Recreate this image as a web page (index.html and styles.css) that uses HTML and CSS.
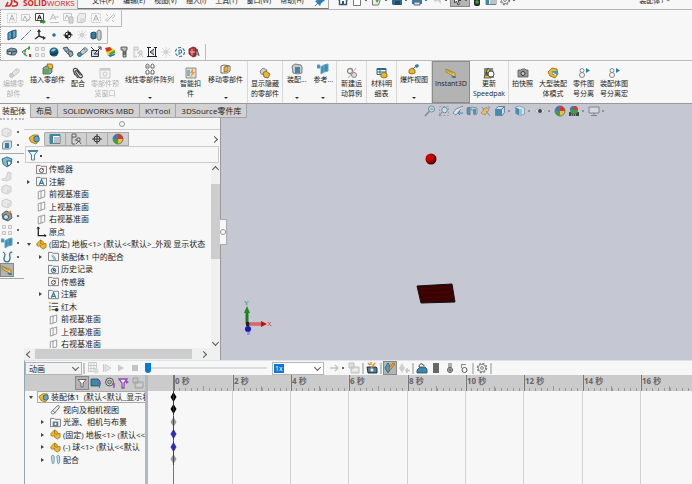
FILE: index.html
```
<!DOCTYPE html>
<html lang="zh-CN">
<head>
    <meta charset="UTF-8">
    <meta name="viewport" content="width=device-width, initial-scale=1.0">
    <title>装配体1</title>
    <link rel="stylesheet" href="styles.css">
</head>
<body>
    <!-- Icon sprite -->
    <svg class="sprite" aria-hidden="true">
        <symbol id="note" viewBox="0 0 12 12"><path d="M1.5 1.5h9v9h-9z" fill="none" stroke="#777" stroke-dasharray="2 1"/><path d="M3.5 9L6 3l2.500 6M4.500 7h3" fill="none" stroke="#333"/></symbol>
        <symbol id="note-edit" viewBox="0 0 12 12"><path d="M1.500 2.500h8v6h-8z" fill="none" stroke="#777"/><path d="M3 8l2-4 2 4M6 10l5-5" fill="none" stroke="#333"/></symbol>
        <symbol id="note-add" viewBox="0 0 12 12"><path d="M1.500 1.500h8v7h-8z" fill="#fff" stroke="#444"/><path d="M3.500 7.500L5.500 3l2 4.500M4 6h3" fill="none" stroke="#111"/><path d="M6 9h3V7l3 3-3 2v-1H6z" fill="#2a9a2a"/></symbol>
        <symbol id="note-lines" viewBox="0 0 12 12"><path d="M2 8l3-6 3 6M3 6h4M7 5h4M2 10.500h9" fill="none" stroke="#555"/></symbol>
        <symbol id="note-lock" viewBox="0 0 12 12"><path d="M1.500 1.500h8v7h-8z" fill="none" stroke="#777"/><path d="M3 7l2-4 2 4" fill="none" stroke="#333"/><path d="M7 5h4v6H7z" fill="#999" stroke="#555"/></symbol>
        <symbol id="note-stack" viewBox="0 0 12 12"><path d="M1.500 4.500l2-3h6v6l-2 3h-6z" fill="#ddd" stroke="#666"/><path d="M4 6h6v4H4z" fill="#aaa"/></symbol>
        <symbol id="link" viewBox="0 0 12 12"><path d="M5 7L3 9.500 1.500 8 4 5.500M7 5l2.500-2.500L11 4 8 6.500M4 8l4-4M2 2l2 2M8 8l2 2" fill="none" stroke="#555"/></symbol>
        <symbol id="plane" viewBox="0 0 12 12"><path d="M2 4l4-2v7l-4 2zM6 2l4-1v7l-4 2z" fill="#5fa3c7" stroke="#1e5674"/></symbol>
        <symbol id="axis" viewBox="0 0 12 12"><path d="M1 11L11 1" stroke="#3b7fa5" stroke-dasharray="5 1"/></symbol>
        <symbol id="coord" viewBox="0 0 12 12"><path d="M5 1v6l5 2M5 7l-4 3" fill="none" stroke="#333" stroke-width="1.500"/><path d="M3 3l2-3 2 3zM9 7l3 2-3 2z" fill="#333"/></symbol>
        <symbol id="point" viewBox="0 0 12 12"><circle cx="6" cy="6" r="1.800" fill="#2d7397"/></symbol>
        <symbol id="mass" viewBox="0 0 12 12"><circle cx="6" cy="6" r="3" fill="#fff" stroke="#222"/><path d="M6 6V2.500a3.500 3.500 0 0 1 3.500 3.500zM6 6v3.500a3.500 3.500 0 0 1-3.500-3.500z" fill="#222"/><path d="M6 1v10M1 6h10" stroke="#222" stroke-width=".6"/></symbol>
        <symbol id="burst" viewBox="0 0 12 12"><path d="M6 1v10M1 6h10M2 2l8 8M10 2l-8 8" stroke="#888" stroke-width=".8"/><circle cx="6" cy="6" r="2" fill="#888"/></symbol>
        <symbol id="mate-ref" viewBox="0 0 12 12"><path d="M1 4l3-1 2 1v5l-3 1-2-1z" fill="#347da3" stroke="#1e4d68"/><path d="M7 3c1-3 4-2 4 0v6c0 3-3 3-4 0z" fill="#ccc" stroke="#777"/></symbol>
        <symbol id="glasses" viewBox="0 0 12 12"><path d="M1 4l4-2 5 1 1 3-2 3H5L1 8z" fill="#6d98ac" stroke="#444" stroke-width=".8"/><path d="M1 5l5 1 5-1M6 6L5 9" fill="none" stroke="#333" stroke-width=".8"/><circle cx="4" cy="7" r="1" fill="#ddd"/></symbol>
        <symbol id="clearance" viewBox="0 0 12 12"><path d="M8 2L2 6l5 4M5 4v4" fill="none" stroke="#666"/><path d="M3 5l3-2v3zM8 1l2-1v3L8 4z" fill="#3a3"/><path d="M9 8h2v3H9z" fill="#e22"/><path d="M4 8l3 2" stroke="#3a3" stroke-width="1.300"/></symbol>
        <symbol id="pattern" viewBox="0 0 12 12"><path d="M1.500 1.500h3v3h-3zM7.500 1.500h3v3h-3zM1.500 7.500h3v3h-3zM7.500 7.500h3v3h-3z" fill="#ddd" stroke="#666"/></symbol>
        <symbol id="globe" viewBox="0 0 12 12"><circle cx="6" cy="6" r="4.500" fill="#1f5878"/><path d="M3 5c1-3 4-3 5-2-1 2-3 3-5 2z" fill="#8fc5dd"/><path d="M2 8c3 1 6 0 8-2" fill="none" stroke="#0b2839"/></symbol>
        <symbol id="cylinders" viewBox="0 0 12 12"><path d="M1 2l4-1 2 3-3 2zM6 6l4-1 1 4-3 2z" fill="#7fb3cb" stroke="#555"/><path d="M4 6l3 3M6 3l4 3" stroke="#555"/></symbol>
        <symbol id="clip" viewBox="0 0 12 12"><path d="M2 8l6-6c2-1 4 1 3 3L6 9" fill="#ccc" stroke="#666"/><circle cx="3.500" cy="8.500" r="2" fill="#4c93b5" stroke="#285b75"/><circle cx="8.500" cy="3.500" r="1" fill="#4c93b5"/></symbol>
        <symbol id="measure" viewBox="0 0 12 12"><path d="M1.500 4.500h7v6h-7z" fill="#cde" stroke="#333"/><path d="M1 1l3 3M4 8l6-6M8 1h3v3M4 8h5" fill="none" stroke="#333"/></symbol>
        <symbol id="rainbow" viewBox="0 0 12 12"><path d="M1 2l5-1 5 3v5L6 11 3 9z" fill="#f6d33b"/><path d="M1 2l5-1 2 3-5 2z" fill="#dc3024"/><path d="M5 7l6-3v3L6 9z" fill="#3daf3d"/><path d="M4 9l2 2 5-2V8z" fill="#2a67c5"/></symbol>
        <symbol id="bolt" viewBox="0 0 12 12"><path d="M3 1h6v3H8v7H5V4H3z" fill="#bbb" stroke="#444" stroke-width=".8"/><path d="M5 6h3M5 8h3" stroke="#333"/></symbol>
        <symbol id="section" viewBox="0 0 12 12"><path d="M2.500 1v10M9.500 1v10M1 1.500h4M1 10.500h10M8 1.500h3" stroke="#222"/><path d="M8 3L4 6l4 3" fill="#9bd" stroke="#333"/></symbol>
        <symbol id="gear" viewBox="0 0 12 12"><circle cx="6" cy="6" r="4.600" fill="none" stroke="#777" stroke-width="1.200" stroke-dasharray="2 1.600"/><circle cx="6" cy="6" r="3.700" fill="none" stroke="#777" stroke-width=".8"/><circle cx="6" cy="6" r="1.400" fill="none" stroke="#666" stroke-width=".8"/></symbol>
        <symbol id="cycle" viewBox="0 0 12 12"><circle cx="6" cy="6" r="4.500" fill="none" stroke="#2d7d9e" stroke-width="1.200" stroke-dasharray="3 1.700"/><path d="M5 9V4h2.500v3H5" fill="none" stroke="#2d7d9e"/></symbol>
        <symbol id="redbox" viewBox="0 0 12 12"><path d="M1 3l4-2 3 1v8l-3 1-4-3z" fill="#b93337" stroke="#721" stroke-width=".8"/><path d="M4 3v6M2 6h5" stroke="#e9b5b5"/><path d="M6.500 10L9 3l2 7M7.500 8h3" fill="none" stroke="#444"/></symbol>
        <symbol id="home" viewBox="0 0 12 12"><path d="M1 6l5-5 5 5M2.500 5.500v5h7v-5" fill="#fff" stroke="#35586c" stroke-width="1.400"/><path d="M5 7h2v4H5z" fill="#35586c"/></symbol>
        <symbol id="page" viewBox="0 0 12 12"><path d="M2.500.5h5l2 2v9h-7z" fill="#fff" stroke="#777"/></symbol>
        <symbol id="open" viewBox="0 0 12 12"><path d="M1.500 11V1h6l3 1-3 9z" fill="#eee" stroke="#777"/><path d="M4 5l3-3 1 4-2 3z" fill="#4a2"/></symbol>
        <symbol id="save" viewBox="0 0 12 12"><path d="M1 1h10v10H2l-1-1z" fill="#286d90"/><path d="M3 1h6v4H3z" fill="#8cc"/><path d="M4 7h5v4H4z" fill="#345"/></symbol>
        <symbol id="print" viewBox="0 0 12 12"><path d="M3 1h6v4H3z" fill="#fff" stroke="#777"/><path d="M1 5h10v5H1z" fill="#397e9f"/><path d="M3 8h6v3H3z" fill="#dde" stroke="#567"/></symbol>
        <symbol id="undo" viewBox="0 0 12 12"><path d="M1 4l4-3v2c5 0 6 4 4 8 0-3-1-4-4-4v2z" fill="#888"/></symbol>
        <symbol id="cursor" viewBox="0 0 12 12"><path d="M3.500 1v8l2-2 1.500 4 1.500-.7L7 6.500h3z" fill="#fff" stroke="#444"/></symbol>
        <symbol id="traffic" viewBox="0 0 12 12"><rect x="3" y="0" width="6" height="12" rx="2" fill="#2b2b2b"/><circle cx="6" cy="3" r="1.500" fill="#a33"/><circle cx="6" cy="8" r="1.800" fill="#3a3"/></symbol>
        <symbol id="list" viewBox="0 0 12 12"><path d="M1 1.500h10v9H1z" fill="#fff" stroke="#466" stroke-width=".8"/><path d="M1 1h10v2H1zM1 3h3v8H1z" fill="#3b88aa"/><path d="M5 5h5M5 7h5M5 9h5" stroke="#567" stroke-width=".8"/></symbol>
        <symbol id="pin" viewBox="0 0 12 12"><path d="M6 1l5 5-2 .5-2 2L6 11 1 6l2.500-1 2-2z" fill="#2d7db3"/><path d="M1 11l3-3" stroke="#2d7db3"/></symbol>
        <symbol id="part" viewBox="0 0 12 12"><path d="M1 5l4-4 3 2v2h3v4L8 11 5 9V7L3 8 1 7z" fill="#eeb72e" stroke="#9a6a0b" stroke-width=".8"/><path d="M5 1v4l3 1" fill="none" stroke="#9a6a0b" stroke-width=".8"/></symbol>
        <symbol id="assembly" viewBox="0 0 12 12"><path d="M1 5l4-3 5 0 1 5-3 4-5-2z" fill="#eeb72e" stroke="#9a6a0b" stroke-width=".8"/><path d="M6 4l3-1 2 1v4L9 9 6 8z" fill="#5fa9cc" stroke="#285b75" stroke-width=".8"/></symbol>
        <symbol id="insert" viewBox="0 0 12 12"><path d="M1 5l3-2h6v6l-2 2H1z" fill="#7ea9bc" stroke="#456" stroke-width=".8"/><path d="M2 6h5v4H2z" fill="#68a94b"/><path d="M5 1h5l1 4-4 1z" fill="#efbd31" stroke="#8a6412" stroke-width=".8"/></symbol>
        <symbol id="paperclip" viewBox="0 0 12 12"><path d="M3 8L1.500 4C1 1.500 3 .5 5 2l5 6c1 2-1 4-3 2L3.500 5C3 4 4 3 5 4l3.500 4.500M3 7l3 4" fill="none" stroke="#444" stroke-width="1.200"/></symbol>
        <symbol id="window" viewBox="0 0 12 12"><path d="M1 1.500h10v9.500H1z" fill="#eee" stroke="#777"/><path d="M1 2.500h10" stroke="#777" stroke-width="2"/><circle cx="6" cy="7" r="2" fill="none" stroke="#777"/></symbol>
        <symbol id="array" viewBox="0 0 12 12"><path d="M2 2l1.500-1L5 2v3H2zM7 2l1.500-1L10 2v3H7zM2 8l1.500-1L5 8v3H2zM7 8l1.500-1L10 8v3H7z" fill="#fff" stroke="#555" stroke-width=".9"/><path d="M3 2.500h1v2H3z" fill="#e7b62c"/></symbol>
        <symbol id="fastener" viewBox="0 0 12 12"><path d="M1 1h10v10H1z" fill="#ddd" stroke="#777" stroke-width=".8"/><path d="M2 3h3v6H2z" fill="#7fb3cb"/><path d="M8 1L5 6h2l-2 5 5-6H8z" fill="#ef9b26"/></symbol>
        <symbol id="move" viewBox="0 0 12 12"><path d="M1 3l3-1 6 1v5l-3 2H1z" fill="#fff" stroke="#555" stroke-width=".9"/><path d="M4 4l4-1v5l-4 1z" fill="#ebb32d" stroke="#866110" stroke-width=".8"/></symbol>
        <symbol id="hide" viewBox="0 0 12 12"><path d="M1 4l3-3 4 2-2 5-4-1z" fill="#ccc" stroke="#777" stroke-width=".8"/><path d="M4 6l3-2 4 3-2 4-4-1z" fill="#edb52c" stroke="#7c5a12" stroke-width=".8"/></symbol>
        <symbol id="feature" viewBox="0 0 12 12"><path d="M1 3l3-2 6 1 1 2v6l-4 1-5-1z" fill="#ccc" stroke="#666" stroke-width=".8"/><path d="M4 4h5v6H4z" fill="#3d88ac"/></symbol>
        <symbol id="reference" viewBox="0 0 12 12"><path d="M0 2h3v3H0zM4 4l3-2v7l-3 2zM7 2l4-1v7l-4 1z" fill="#3b8cb1" stroke="#5ca4c3"/></symbol>
        <symbol id="motion" viewBox="0 0 12 12"><circle cx="4" cy="4" r="2.500" fill="none" stroke="#888" stroke-width="1.300"/><circle cx="8" cy="8" r="2.500" fill="#ddd" stroke="#888"/><path d="M2 11L10 1" stroke="#c88" stroke-width=".8"/></symbol>
        <symbol id="bom" viewBox="0 0 12 12"><path d="M1 1.500h9v6H1z" fill="#fff" stroke="#2c6b8b"/><path d="M1 2.500h9M4 2v5M1 5h9" stroke="#2c6b8b"/><path d="M5 7l3-2 3 2v3L8 11 5 10z" fill="#ecb52d" stroke="#866110" stroke-width=".8"/></symbol>
        <symbol id="explode" viewBox="0 0 12 12"><path d="M1 7l3-2 3 2v3l-3 1-3-1z" fill="#edb62c" stroke="#7c5a12" stroke-width=".8"/><path d="M7 2l3-1 1 2-2 2-2-1z" fill="#2f7fa5"/><path d="M5 6l2-2" stroke="#555"/></symbol>
        <symbol id="instant" viewBox="0 0 12 12"><path d="M1 2l9 4v4L1 5z" fill="#f1c950" stroke="#8d701c" stroke-width=".7"/><path d="M3 3v2M5 4v2M7 5v2" stroke="#765" stroke-width=".7"/><path d="M6 9h4l1 2H8z" fill="#357b9d"/></symbol>
        <symbol id="speedpak" viewBox="0 0 12 12"><path d="M1 1h9l1 10H1z" fill="#888"/><path d="M5 1l3 4v6H1z" fill="#f2c230" stroke="#333" stroke-width=".7"/><circle cx="8" cy="7" r="3" fill="#fff" stroke="#357"/><path d="M4 5v4" stroke="#111"/></symbol>
        <symbol id="camera" viewBox="0 0 12 12"><path d="M1 3h3l1-1h3l1 1h2v7H1z" fill="#999" stroke="#555" stroke-width=".8"/><circle cx="6" cy="6.500" r="2" fill="#ccc" stroke="#333"/></symbol>
        <symbol id="large" viewBox="0 0 12 12"><path d="M1 5l4-4 5 1 1 5-3 4-5-2z" fill="#edb62c" stroke="#866110" stroke-width=".8"/><path d="M5 4h5v4H6z" fill="#4b96ba"/><path d="M6 6l3 2" stroke="#fff"/></symbol>
        <symbol id="split" viewBox="0 0 12 12"><circle cx="4" cy="3.500" r="2" fill="none" stroke="#888"/><circle cx="4" cy="8" r="2.500" fill="none" stroke="#888"/><path d="M8 1l4 2.500L8 6z" fill="#1d84ac"/></symbol>
        <symbol id="zoom" viewBox="0 0 12 12"><circle cx="7.500" cy="4" r="3" fill="#c7dfe9" stroke="#7c8792"/><path d="M5 6.500L1 11" stroke="#7c8792" stroke-width="1.500"/><path d="M6 4h3" stroke="#4a8fb3"/></symbol>
        <symbol id="zoom-area" viewBox="0 0 12 12"><path d="M1.500 1.500h9v9h-9z" fill="none" stroke="#9ba2ac" stroke-dasharray="2 1.500"/><circle cx="6.500" cy="5" r="2.800" fill="#c7dfe9" stroke="#7c8792"/><path d="M4 7l-3 4" stroke="#7c8792"/></symbol>
        <symbol id="prev-view" viewBox="0 0 12 12"><path d="M11 1L4 4 1 8l3 2 5-6" fill="#dce4e8" stroke="#808c97"/><path d="M6 8h5M8 6L6 8l2 2" fill="none" stroke="#3784a7"/></symbol>
        <symbol id="cut-view" viewBox="0 0 12 12"><path d="M1 3l3-1v8l-3-1z" fill="#4b93b7" stroke="#65808e" stroke-width=".8"/><path d="M5 2l6 1v6l-3 1V5H5z" fill="#cdd4d8" stroke="#65808e" stroke-width=".8"/><path d="M7 4h3v5H7z" fill="#4b93b7"/></symbol>
        <symbol id="wand" viewBox="0 0 12 12"><path d="M1 8l5-6 3 3-4 5z" fill="#f0ba5e" stroke="#a78554" stroke-width=".8"/><path d="M6 6l4 5M2 2l2 3M9 1v3" stroke="#6a96b0"/></symbol>
        <symbol id="cube" viewBox="0 0 12 12"><path d="M1.500 4l3-2.500h6v6l-2 3h-7z" fill="#c7d9e2" stroke="#5a7482" stroke-width=".8"/><path d="M2 4h6v6H2z" fill="#3f8db2"/><path d="M8 4l2.500-2.500" stroke="#5a7482"/></symbol>
        <symbol id="shaded" viewBox="0 0 12 12"><path d="M1.500 2l4-1 5 2v6l-4 1.500-5-2z" fill="#d8e3e8" stroke="#7b94a0" stroke-width=".8"/><path d="M2 2.500l3 1.500v6L2 8.500z" fill="#3f8db2"/><path d="M5 4h3v6H5z" fill="#8fc4dd"/></symbol>
        <symbol id="eye" viewBox="0 0 12 12"><path d="M1 6c3-4 7-4 10 0-3 4-7 4-10 0z" fill="#d6d8dd" stroke="#a8aeb6" stroke-width=".7"/><circle cx="6" cy="6" r="2" fill="#444"/></symbol>
        <symbol id="ball" viewBox="0 0 12 12"><circle cx="6" cy="6" r="5" fill="#e6c13c" stroke="#555" stroke-width=".7"/><path d="M6 6V1a5 5 0 0 0-5 5z" fill="#3b78c4"/><path d="M6 6V1a5 5 0 0 1 5 5z" fill="#d23a30"/><path d="M6 6H1a5 5 0 0 0 5 5z" fill="#3d9e45"/></symbol>
        <symbol id="scene" viewBox="0 0 12 12"><path d="M1 7h10v4H1z" fill="#444"/><circle cx="6" cy="5" r="4" fill="#3b9f46"/><path d="M6 5V1a4 4 0 0 1 4 4z" fill="#d23a30"/><path d="M6 5V1a4 4 0 0 0-4 4z" fill="#3b78c4"/><path d="M3 10h6" stroke="#ddd" stroke-dasharray="1 1"/></symbol>
        <symbol id="monitor" viewBox="0 0 12 12"><path d="M1 2h10v6H1z" fill="#d5d9dd" stroke="#7c848c"/><path d="M6 8v2M3 10.500h6" stroke="#7c848c"/></symbol>
        <symbol id="target" viewBox="0 0 12 12"><circle cx="6" cy="6" r="3" fill="none" stroke="#333"/><path d="M6 1v10M1 6h10" stroke="#333"/></symbol>
        <symbol id="config" viewBox="0 0 12 12"><path d="M2 1h4v3H2zM2 4v7h3M5 7h2M7 5h3v3H7zM6 11l3-3 2 3" fill="#ddd" stroke="#555" stroke-width=".9"/></symbol>
        <symbol id="funnel" viewBox="0 0 12 12"><path d="M1 1.500h10L7.500 6v5h-3V6z" fill="#eef4f7" stroke="#4f7f97"/><path d="M2 2.500h8" stroke="#3f8db2"/></symbol>
        <symbol id="funnel-plain" viewBox="0 0 12 12"><path d="M2 2.500h8L7 6v4H5V6z" fill="#fff" stroke="#666"/></symbol>
        <symbol id="folder" viewBox="0 0 12 12"><path d="M.5 10.500v-9h4l1 1h6v8z" fill="#f4f4f4" stroke="#777"/></symbol>
        <symbol id="sensor" viewBox="0 0 12 12"><use href="#folder"/><circle cx="6" cy="7" r="2.200" fill="#fff" stroke="#444"/><path d="M6 7l2-2" stroke="#c22"/></symbol>
        <symbol id="annot" viewBox="0 0 12 12"><use href="#folder"/><path d="M3.500 9.500L6 4l2.500 5.500M4.500 8h3" fill="none" stroke="#257baa" stroke-width="1.200"/></symbol>
        <symbol id="history" viewBox="0 0 12 12"><use href="#folder"/><circle cx="6" cy="7" r="2.500" fill="#b9d9e8" stroke="#357b9d"/><path d="M6 5v2h2" fill="none" stroke="#234"/></symbol>
        <symbol id="mates-folder" viewBox="0 0 12 12"><use href="#folder"/><path d="M4 5l3 4M5 4l3 4c1 2-1 2-2 1" fill="none" stroke="#4c93b5"/></symbol>
        <symbol id="lights" viewBox="0 0 12 12"><use href="#folder"/><path d="M3 5h6v5H3z" fill="#55798c"/><circle cx="6" cy="7.500" r="1.200" fill="#fff"/></symbol>
        <symbol id="datum" viewBox="0 0 12 12"><path d="M2.500 3L5.500 2v8l-3 1zM5.500 2.500l4-1.500v7.500l-4 1.500" fill="#fafafa" stroke="#888" stroke-width=".9"/></symbol>
        <symbol id="origin" viewBox="0 0 12 12"><path d="M2.500 1v9.500H11" fill="none" stroke="#222" stroke-width="1.400"/><path d="M1 3l1.500-2L4 3M9 9l2 1.500L9 12" fill="none" stroke="#222"/></symbol>
        <symbol id="material" viewBox="0 0 12 12"><path d="M4 2.500h7M4 6h7M4 9.500h5" stroke="#666" stroke-width="1.300"/><path d="M1 1h2v2H1z" fill="#e7b62c"/><path d="M1 5h2v2H1z" fill="#3f8db2"/><path d="M1 8h2v3H1z" fill="#e7b62c"/><circle cx="9.500" cy="9.500" r="2" fill="#333"/></symbol>
        <symbol id="view-cam" viewBox="0 0 12 12"><path d="M2 8l6-6c1-1 3 0 2 2l-5 6c-2 2-5 0-3-2zM3 7l3 3" fill="#eee" stroke="#666"/></symbol>
        <symbol id="mates" viewBox="0 0 12 12"><path d="M1.500 3c0-2 3-2 3 0v5c0 3-2 3-2 2zM7.500 3c0-2 3-2 3 0v5c0 3-2 3-2 2z" fill="#cfe3ec" stroke="#5b93af"/></symbol>
        <symbol id="solid" viewBox="0 0 12 12"><path d="M1 4l4-2 5 2v5l-4 2-5-2z" fill="#ccc" stroke="#777"/><path d="M6 6h4v4H6z" fill="#aaa"/></symbol>
        <symbol id="rib" viewBox="0 0 12 12"><path d="M1 9l4-1 2-6 3 1v6l-4 2-5-1z" fill="#bbb" stroke="#888"/></symbol>
        <symbol id="copy" viewBox="0 0 12 12"><path d="M1.500 4l2-2h7v6l-2 2h-7z" fill="#ddd" stroke="#547a8b" stroke-width=".8"/><path d="M4 4h4v5H4z" fill="#367fa2"/></symbol>
        <symbol id="edge" viewBox="0 0 12 12"><path d="M1 3l5-2 5 2-1 5-4 3-4-3z" fill="#7eb9d2" stroke="#285b75" stroke-width=".8"/><path d="M6 5h4v3L7 10z" fill="#fff" stroke="#285b75"/></symbol>
        <symbol id="curve" viewBox="0 0 12 12"><path d="M2 1c4 2 1 4 1 7 0 4 6 4 6-1 0-3-2-5 2-6" fill="none" stroke="#2d7397" stroke-width="1.300"/></symbol>
        <symbol id="hole" viewBox="0 0 12 12"><path d="M1 4l4-3 5 2 1 5-4 3-5-2z" fill="#999" stroke="#444" stroke-width=".8"/><circle cx="5" cy="7" r="2.500" fill="#cfe3ec" stroke="#285b75"/><path d="M6 5l4-4" stroke="#db8b22" stroke-width="1.500"/></symbol>
        <symbol id="calc" viewBox="0 0 12 12"><path d="M1.500.5h8v9h-8zM1.500 3.500h8M4 1v9M7 1v9M1.500 6.500h8" fill="none" stroke="#777"/><circle cx="9" cy="9" r="2.500" fill="#aaa"/></symbol>
        <symbol id="play" viewBox="0 0 12 12"><path d="M3 2.500L9 6 3 9.500z" fill="#777"/></symbol>
        <symbol id="play-start" viewBox="0 0 12 12"><path d="M2.500 2v8" stroke="#777"/><path d="M4 2.500L10 6 4 9.500z" fill="#ccc" stroke="#777"/></symbol>
        <symbol id="stop" viewBox="0 0 12 12"><path d="M3 3h6v6H3z" fill="#666"/></symbol>
        <symbol id="arrow" viewBox="0 0 12 12"><path d="M2 6h8M7 3l3 3-3 3" fill="none" stroke="#666" stroke-width="1.400"/></symbol>
        <symbol id="film" viewBox="0 0 12 12"><path d="M1 1h5v5H1zM3 5h8v6H3z" fill="#bbb" stroke="#555"/><path d="M5 8h5" stroke="#fff"/></symbol>
        <symbol id="wizard" viewBox="0 0 12 12"><path d="M1 5h9l1 1v5H2z" fill="#3e84a5" stroke="#222" stroke-width=".9"/><path d="M2 1l2 2M5 0v3M9 1L4 8" stroke="#db8b22" stroke-width="1.300"/><circle cx="6" cy="8" r="1.500" fill="#eee"/></symbol>
        <symbol id="autokey" viewBox="0 0 12 12"><path d="M4 1l3 5-3 5-3-5z" fill="#4d9cc3" stroke="#285b75" stroke-width=".8"/><path d="M5 6l4-5 2 1-5 6z" fill="#f3a531" stroke="#a55e13" stroke-width=".8"/></symbol>
        <symbol id="addkey" viewBox="0 0 12 12"><path d="M4 1l3 5-3 5-3-5z" fill="#888"/><path d="M9 6v5M7 8.500h5" stroke="#666" stroke-width="1.500"/></symbol>
        <symbol id="motor" viewBox="0 0 12 12"><path d="M1 8l3-3h5l2 2v4H1z" fill="#3d88ac" stroke="#28495a" stroke-width=".8"/><path d="M3 5c0-4 4-4 5-1" fill="none" stroke="#333"/></symbol>
        <symbol id="spring" viewBox="0 0 12 12"><path d="M3 1h6v10H3z" fill="#888"/><path d="M3 2h6M3 4h6M3 6h6M3 8h6M3 10h6" stroke="#444"/></symbol>
        <symbol id="contact" viewBox="0 0 12 12"><path d="M5 1v5M7 1v5" stroke="#666"/><circle cx="6" cy="8" r="2.500" fill="none" stroke="#555"/><path d="M6 6v4M4 8h4" stroke="#555"/></symbol>
        <symbol id="gravity" viewBox="0 0 12 12"><circle cx="6.500" cy="8" r="2.500" fill="#fff" stroke="#555"/><path d="M3.500 2v4M3 2.500h5" fill="none" stroke="#888"/></symbol>
        <symbol id="filter-key" viewBox="0 0 12 12"><path d="M1 2h8L6 6v5H4V6z" fill="#eee" stroke="#934ab0" stroke-width="1.300"/><path d="M8 3l3 2-3 2z" fill="#934ab0"/></symbol>
        <symbol id="filter-anim" viewBox="0 0 12 12"><path d="M1 2h7l2 2v5H1z" fill="#3d88ac" stroke="#28495a" stroke-width=".8"/><path d="M9.500 5v6M8 7l1.500-2L11 7" stroke="#934ab0" fill="none"/></symbol>
        <symbol id="filter-res" viewBox="0 0 12 12"><circle cx="5.500" cy="5" r="4" fill="none" stroke="#555"/><circle cx="5.500" cy="5" r="1.800" fill="none" stroke="#555"/><path d="M10 6v5" stroke="#934ab0" stroke-width="1.500"/></symbol>
        <symbol id="key" viewBox="0 0 8 12"><path d="M4 1l3 5-3 5-3-5z" fill="currentColor"/><path d="M4 0v12" stroke="#333" stroke-width=".8"/></symbol>
    </svg>

    <header class="menubar">
        <div class="brand"><svg class="brand-mark" viewBox="0 0 16 12"><path d="M1 2h4c3 0 2 6-1 7H1l2-4M14 2h-3c-3 0-2 3 0 3s2 4-1 4H7" fill="none" stroke="#d9251c" stroke-width="1.600"/></svg><b>SOLID</b><span>WORKS</span></div>
        <nav class="menus">
            <a href="#file">文件(F)</a>
            <a href="#edit">编辑(E)</a>
            <a href="#view">视图(V)</a>
            <a href="#insert-menu">插入(I)</a>
            <a href="#tools">工具(T)</a>
            <a href="#window-menu">窗口(W)</a>
            <a href="#help">帮助(H)</a>
            <button class="tool" aria-label="固定菜单"><svg><use href="#pin"/></svg></button>
        </nav>
        <div class="quick">
            <button class="tool" aria-label="主页"><svg><use href="#home"/></svg></button>
            <button class="tool more" aria-label="新建"><svg><use href="#page"/></svg></button>
            <button class="tool more" aria-label="打开"><svg><use href="#open"/></svg></button>
            <button class="tool more" aria-label="保存"><svg><use href="#save"/></svg></button>
            <button class="tool more" aria-label="打印"><svg><use href="#print"/></svg></button>
            <button class="tool more off" aria-label="撤销"><svg><use href="#undo"/></svg></button>
            <button class="tool more picked" aria-label="选择"><svg><use href="#cursor"/></svg></button>
            <button class="tool" aria-label="重建"><svg><use href="#traffic"/></svg></button>
            <button class="tool" aria-label="文件属性"><svg><use href="#list"/></svg></button>
            <button class="tool more" aria-label="选项"><svg><use href="#gear"/></svg></button>
        </div>
        <span class="doc-name">装配体1 *</span>
    </header>

    <section class="toolbars">
        <div class="toolbar">
            <button class="tool off" aria-label="注释"><svg><use href="#note"/></svg></button>
            <button class="tool off" aria-label="编辑注释"><svg><use href="#note-edit"/></svg></button>
            <button class="tool" aria-label="添加注解视图"><svg><use href="#note-add"/></svg></button>
            <button class="tool off" aria-label="对齐"><svg><use href="#note-lines"/></svg></button>
            <button class="tool off" aria-label="锁定"><svg><use href="#note-lock"/></svg></button>
            <button class="tool off" aria-label="图层"><svg><use href="#note-stack"/></svg></button>
            <button class="tool off" aria-label="区域"><svg><use href="#note"/></svg></button>
            <button class="tool off" aria-label="断开链接"><svg><use href="#link"/></svg></button>
        </div>
        <div class="toolbar">
            <button class="tool" aria-label="基准面"><svg><use href="#plane"/></svg></button>
            <button class="tool" aria-label="基准轴"><svg><use href="#axis"/></svg></button>
            <button class="tool" aria-label="坐标系"><svg><use href="#coord"/></svg></button>
            <button class="tool" aria-label="点"><svg><use href="#point"/></svg></button>
            <button class="tool" aria-label="质心"><svg><use href="#mass"/></svg></button>
            <button class="tool off" aria-label="边界框"><svg><use href="#burst"/></svg></button>
            <button class="tool" aria-label="配合参考"><svg><use href="#mate-ref"/></svg></button>
        </div>
        <div class="toolbar">
            <button class="tool" aria-label="干涉检查"><svg><use href="#glasses"/></svg></button>
            <button class="tool" aria-label="间隙验证"><svg><use href="#clearance"/></svg></button>
            <button class="tool off" aria-label="孔对齐"><svg><use href="#pattern"/></svg></button>
            <button class="tool" aria-label="可视化"><svg><use href="#globe"/></svg></button>
            <button class="tool" aria-label="性能评估"><svg><use href="#cylinders"/></svg></button>
            <button class="tool" aria-label="曲率"><svg><use href="#clip"/></svg></button>
            <button class="tool" aria-label="测量"><svg><use href="#measure"/></svg></button>
            <button class="tool" aria-label="分析"><svg><use href="#rainbow"/></svg></button>
            <button class="tool" aria-label="螺栓"><svg><use href="#bolt"/></svg></button>
            <button class="tool off" aria-label="比较"><svg><use href="#config"/></svg></button>
            <button class="tool" aria-label="剖面属性"><svg><use href="#section"/></svg></button>
            <button class="tool off" aria-label="传感器"><svg><use href="#burst"/></svg></button>
            <button class="tool" aria-label="循环"><svg><use href="#cycle"/></svg></button>
            <button class="tool" aria-label="检查"><svg><use href="#redbox"/></svg></button>
        </div>
    </section>

    <section class="ribbon">
        <button class="cmd off"><svg><use href="#clip"/></svg><span>编辑零<br>部件</span></button>
        <button class="cmd drop"><svg><use href="#insert"/></svg><span>插入零部件</span></button>
        <button class="cmd"><svg><use href="#paperclip"/></svg><span>配合</span></button>
        <button class="cmd off"><svg><use href="#window"/></svg><span>零部件预<br>览窗口</span></button>
        <button class="cmd drop"><svg><use href="#array"/></svg><span>线性零部件阵列</span></button>
        <button class="cmd"><svg><use href="#fastener"/></svg><span>智能扣<br>件</span></button>
        <button class="cmd drop last wide"><svg><use href="#move"/></svg><span>移动零部件</span></button>
        <button class="cmd last"><svg><use href="#hide"/></svg><span>显示隐藏<br>的零部件</span></button>
        <button class="cmd drop wide"><svg><use href="#feature"/></svg><span>装配...</span></button>
        <button class="cmd drop last"><svg><use href="#reference"/></svg><span>参考...</span></button>
        <button class="cmd last wide"><svg><use href="#motion"/></svg><span>新建运<br>动算例</span></button>
        <button class="cmd last wide"><svg><use href="#bom"/></svg><span>材料明<br>细表</span></button>
        <button class="cmd drop last"><svg><use href="#explode"/></svg><span>爆炸视图</span></button>
        <button class="cmd pressed"><svg><use href="#instant"/></svg><span>Instant3D</span></button>
        <button class="cmd last"><svg><use href="#speedpak"/></svg><span>更新<br>Speedpak</span></button>
        <button class="cmd"><svg><use href="#camera"/></svg><span>拍快照</span></button>
        <button class="cmd"><svg><use href="#large"/></svg><span>大型装配<br>体模式</span></button>
        <button class="cmd"><svg><use href="#split"/></svg><span>零件图<br>号分离</span></button>
        <button class="cmd"><svg><use href="#split"/></svg><span>装配体图<br>号分离宏</span></button>
    </section>

    <div class="tabrow">
        <nav class="tabs">
            <a href="#assembly-tab" class="active">装配体</a>
            <a href="#layout">布局</a>
            <a href="#mbd">SOLIDWORKS MBD</a>
            <a href="#kytool">KYTool</a>
            <a href="#3dsource">3DSource零件库</a>
        </nav>
        <div class="view-tools">
            <button class="tool" aria-label="整屏显示"><svg><use href="#zoom"/></svg></button>
            <button class="tool" aria-label="局部放大"><svg><use href="#zoom-area"/></svg></button>
            <button class="tool" aria-label="上一视图"><svg><use href="#prev-view"/></svg></button>
            <button class="tool" aria-label="剖面视图"><svg><use href="#cut-view"/></svg></button>
            <button class="tool" aria-label="动态注解"><svg><use href="#wand"/></svg></button>
            <button class="tool more" aria-label="视图定向"><svg><use href="#cube"/></svg></button>
            <button class="tool more" aria-label="显示样式"><svg><use href="#shaded"/></svg></button>
            <button class="tool more" aria-label="隐藏/显示项目"><svg><use href="#eye"/></svg></button>
            <button class="tool" aria-label="编辑外观"><svg><use href="#ball"/></svg></button>
            <button class="tool more" aria-label="应用布景"><svg><use href="#scene"/></svg></button>
            <button class="tool more" aria-label="视图设置"><svg><use href="#monitor"/></svg></button>
        </div>
    </div>

    <main class="workspace">
        <aside class="side-tools">
            <button class="tool more off" aria-label="实体"><svg><use href="#solid"/></svg></button>
            <button class="tool more" aria-label="复制"><svg><use href="#copy"/></svg></button>
            <hr>
            <button class="tool more" aria-label="圆角"><svg><use href="#edge"/></svg></button>
            <button class="tool off" aria-label="筋"><svg><use href="#rib"/></svg></button>
            <button class="tool off" aria-label="拔模"><svg><use href="#solid"/></svg></button>
            <button class="tool off" aria-label="抽壳"><svg><use href="#solid"/></svg></button>
            <button class="tool more" aria-label="异型孔"><svg><use href="#hole"/></svg></button>
            <button class="tool more off" aria-label="阵列"><svg><use href="#pattern"/></svg></button>
            <button class="tool more" aria-label="参考几何体"><svg><use href="#reference"/></svg></button>
            <button class="tool more" aria-label="曲线"><svg><use href="#curve"/></svg></button>
            <button class="tool picked" aria-label="Instant3D"><svg><use href="#instant"/></svg></button>
            <hr>
        </aside>

        <section class="manager">
            <div class="grip"></div>
            <div class="manager-tabs">
                <button class="active" aria-label="设计树"><svg><use href="#assembly"/></svg></button>
                <button aria-label="属性"><svg><use href="#list"/></svg></button>
                <button aria-label="配置"><svg><use href="#config"/></svg></button>
                <button aria-label="尺寸专家"><svg><use href="#target"/></svg></button>
                <button aria-label="外观"><svg><use href="#ball"/></svg></button>
                <i class="chev right"></i>
            </div>
            <button class="filter" aria-label="过滤器"><svg><use href="#funnel"/></svg></button>
            <div class="tree-area">
                <ul class="tree">
                    <li><svg><use href="#sensor"/></svg>传感器</li>
                    <li class="fold"><svg><use href="#annot"/></svg>注解</li>
                    <li><svg><use href="#datum"/></svg>前视基准面</li>
                    <li><svg><use href="#datum"/></svg>上视基准面</li>
                    <li><svg><use href="#datum"/></svg>右视基准面</li>
                    <li><svg><use href="#origin"/></svg>原点</li>
                    <li class="fold open"><svg><use href="#part"/></svg>(固定) 地板&lt;1&gt; (默认&lt;&lt;默认&gt;_外观 显示状态</li>
                    <li class="sub fold"><svg><use href="#mates-folder"/></svg>装配体1 中的配合</li>
                    <li class="sub"><svg><use href="#history"/></svg>历史记录</li>
                    <li class="sub"><svg><use href="#sensor"/></svg>传感器</li>
                    <li class="sub fold"><svg><use href="#annot"/></svg>注解</li>
                    <li class="sub"><svg><use href="#material"/></svg>红木</li>
                    <li class="sub"><svg><use href="#datum"/></svg>前视基准面</li>
                    <li class="sub"><svg><use href="#datum"/></svg>上视基准面</li>
                    <li class="sub"><svg><use href="#datum"/></svg>右视基准面</li>
                </ul>
                <div class="vscroll"><i class="chev up"></i><span></span><i class="chev down"></i></div>
            </div>
            <div class="hscroll"><i class="chev left"></i><span></span><i class="chev right"></i></div>
        </section>

        <section class="viewport">
            <button class="collapse" aria-label="收起面板"></button>
            <svg class="model">
                <defs>
                    <radialGradient id="red" cx=".35" cy=".35" r=".7">
                        <stop offset="0" stop-color="#e80000"/>
                        <stop offset=".5" stop-color="#b00000"/>
                        <stop offset="1" stop-color="#3a0000"/>
                    </radialGradient>
                </defs>
                <circle cx="210" cy="41" r="5.500" fill="url(#red)"/>
                <path d="M196 168l35-2 3 18-34 1z" fill="#3b0203" stroke="#111"/>
                <path d="M199 171l31-2M199 175l32-1M200 180l32-2" stroke="#480605" fill="none"/>
                <!-- Axis triad -->
                <path d="M26 192v14" stroke="#1f7a1f" stroke-width="3"/>
                <path d="M23 195l3-7 3 7z" fill="#1f8a1f"/>
                <path d="M28 206h14" stroke="#c33" stroke-width="3"/>
                <path d="M29 206h13" stroke="#e99"/>
                <path d="M40 203l6 3-6 3z" fill="#b11"/>
                <path d="M25 204h3v4h-3z" fill="#222"/>
                <circle cx="27" cy="211" r="3" fill="#1818b0"/>
                <text x="23" y="187" fill="#3a9a4a">Y</text>
                <text x="46" y="208" fill="#e23c3c">X</text>
                <path d="M26 214h3M26 216h3" stroke="#44f" stroke-width=".7"/>
            </svg>
        </section>
    </main>

    <section class="study">
        <div class="study-bar">
            <span class="picker study-type"><select aria-label="算例类型"><option>动画</option></select><i class="chev down"></i></span>
            <i class="sep"></i>
            <button class="tool off" aria-label="计算"><svg><use href="#calc"/></svg></button>
            <button class="tool off" aria-label="从头播放"><svg><use href="#play-start"/></svg></button>
            <button class="tool off" aria-label="播放"><svg><use href="#play"/></svg></button>
            <button class="tool off" aria-label="停止"><svg><use href="#stop"/></svg></button>
            <input type="range" class="seek" value="0" aria-label="时间">
            <span class="picker speed"><mark>1x</mark><select aria-label="播放速度"><option label=" ">1x</option></select><i class="chev down"></i></span>
            <button class="tool more off" aria-label="播放模式"><svg><use href="#arrow"/></svg></button>
            <button class="tool off" aria-label="保存动画"><svg><use href="#film"/></svg></button>
            <i class="sep"></i>
            <button class="tool" aria-label="动画向导"><svg><use href="#wizard"/></svg></button>
            <i class="sep"></i>
            <button class="tool picked" aria-label="自动键码"><svg><use href="#autokey"/></svg></button>
            <button class="tool off" aria-label="添加键码"><svg><use href="#addkey"/></svg></button>
            <i class="sep"></i>
            <button class="tool" aria-label="马达"><svg><use href="#motor"/></svg></button>
            <button class="tool" aria-label="弹簧"><svg><use href="#spring"/></svg></button>
            <button class="tool" aria-label="接触"><svg><use href="#contact"/></svg></button>
            <button class="tool" aria-label="引力"><svg><use href="#gravity"/></svg></button>
            <i class="sep"></i>
            <button class="tool" aria-label="运动算例属性"><svg><use href="#gear"/></svg></button>
            <i class="sep"></i>
        </div>
        <div class="study-body">
            <div class="study-tree">
                <div class="study-filters">
                    <button class="tool picked" aria-label="无过滤"><svg><use href="#funnel-plain"/></svg></button>
                    <button class="tool" aria-label="过滤动画"><svg><use href="#filter-anim"/></svg></button>
                    <button class="tool" aria-label="过滤驱动"><svg><use href="#filter-res"/></svg></button>
                    <button class="tool" aria-label="过滤选定"><svg><use href="#filter-key"/></svg></button>
                    <button class="tool off" aria-label="过滤结果"><svg><use href="#film"/></svg></button>
                </div>
                <ul class="tree">
                    <li class="fold open root"><svg><use href="#assembly"/></svg>装配体1&nbsp; (默认&lt;默认_显示状态</li>
                    <li class="sub"><svg><use href="#view-cam"/></svg>视向及相机视图</li>
                    <li class="sub fold"><svg><use href="#lights"/></svg>光源、相机与布景</li>
                    <li class="sub fold"><svg><use href="#part"/></svg>(固定) 地板&lt;1&gt; (默认&lt;&lt;</li>
                    <li class="sub fold"><svg><use href="#part"/></svg>(-) 球&lt;1&gt; (默认&lt;&lt;默认</li>
                    <li class="sub fold"><svg><use href="#mates"/></svg>配合</li>
                </ul>
            </div>
            <div class="timeline">
                <ol class="seconds">
                    <li>0 秒</li>
                    <li>2 秒</li>
                    <li>4 秒</li>
                    <li>6 秒</li>
                    <li>8 秒</li>
                    <li>10 秒</li>
                    <li>12 秒</li>
                    <li>14 秒</li>
                    <li>16 秒</li>
                </ol>
                <ul class="keys">
                    <li><svg><use href="#key"/></svg></li>
                    <li><svg><use href="#key"/></svg></li>
                    <li class="muted"><svg><use href="#key"/></svg></li>
                    <li class="blue"><svg><use href="#key"/></svg></li>
                    <li class="blue"><svg><use href="#key"/></svg></li>
                    <li class="muted"><svg><use href="#key"/></svg></li>
                </ul>
            </div>
        </div>
    </section>
</body>
</html>
```
FILE: styles.css
```
* {
    box-sizing: border-box;
}

body {
    margin: 0;
    min-height: 100vh;
    display: flex;
    flex-direction: column;
    overflow: hidden;
    background: #f7f7f7;
    color: #222;
    font-family: "Open Sans", "Noto Sans CJK SC", sans-serif;
    font-size: 8px;
    line-height: 12px;
}

button,
select {
    font: inherit;
    color: inherit;
    padding: 0;
    border: 0;
    background: none;
}

a {
    color: inherit;
    text-decoration: none;
}

ul,
ol {
    list-style: none;
    margin: 0;
    padding: 0;
}

svg {
    width: 12px;
    height: 12px;
    flex: none;
    display: block;
}

.sprite {
    position: absolute;
    width: 0;
    height: 0;
}

/* Icon buttons, used in every toolbar */
.tool {
    width: 14px;
    height: 14px;
    flex: none;
    display: flex;
    align-items: center;
    justify-content: center;
}

.tool.more {
    width: 20px;
    justify-content: space-between;
    padding: 0 3px 0 1px;
}

.more::after {
    content: "";
    width: 2px;
    height: 2px;
    background: #666;
}

.off svg,
.off span {
    filter: grayscale(1);
    opacity: .35;
}

.picked {
    background: #b4b4b4;
    outline: 1px solid #888;
    outline-offset: -1px;
}

.sep {
    width: 2px;
    height: 11px;
    margin: 0 1px;
    background: #c4c4c4;
}

/* Menu bar, scrolled partly out at the top */
.menubar {
    height: 10px;
    display: flex;
    align-items: flex-end;
    overflow: hidden;
    border-bottom: 1px solid #b5b5b5;
    font-size: 7px;
}

.brand {
    width: 78px;
    height: 12px;
    display: flex;
    align-items: center;
    padding-left: 5px;
    background: #ebebeb;
    border-right: 1px solid #aaa;
    color: #d9251c;
    font-size: 8px;
}

.brand-mark {
    width: 16px;
    margin-right: 2px;
}

.menus {
    width: 251px;
    height: 16px;
    display: flex;
    align-items: center;
    justify-content: space-between;
    padding: 0 1px 0 14px;
    border-right: 1px solid #aaa;
    border-bottom: 1px solid #777;
}

.quick {
    height: 16px;
    display: flex;
    align-items: center;
    padding: 0 0 2px 7px;
}

.doc-name {
    margin: 0 22px 2px auto;
}

/* Docked toolbars */
.toolbar {
    width: fit-content;
    height: 17px;
    display: flex;
    align-items: center;
    padding: 0 4px;
    border-left: 1px dotted #999;
    border-right: 1px solid #bbb;
    border-bottom: 1px solid #bbb;
}

.toolbars {
    border-bottom: 1px solid #bbb;
}

.toolbar:last-child {
    border-bottom: 0;
    height: 16px;
}

/* Command ribbon */
.ribbon {
    display: flex;
    height: 42px;
}

.cmd {
    flex: none;
    display: flex;
    flex-direction: column;
    align-items: center;
    padding: 6px 3px 0;
    font-size: 7px;
    line-height: 10px;
    white-space: nowrap;
}

.cmd.drop {
    padding: 2px 3px 4px;
}

.cmd.wide {
    padding-left: 4px;
    padding-right: 4px;
}

.cmd.drop::after {
    content: "";
    margin-top: auto;
    border: 2px solid transparent;
    border-top-color: #333;
    border-bottom: 0;
}

.cmd.last {
    border-right: 1px solid #d8d8d8;
}

.cmd.pressed {
    background: #b3b3b3;
    border: 1px solid #8c8c8c;
    padding: 5px 2px 0;
}

/* Ribbon tabs and the view toolbar beside them */
.tabrow {
    display: flex;
    height: 15px;
    border-top: 1px solid #999;
    background: #c5c8d3;
}

.tabs {
    display: flex;
}

.tabs a {
    padding: 0 5px;
    line-height: 14px;
    background: #d2d2d2;
    border-right: 1px solid #a5a5a5;
    border-bottom: 1px solid #a5a5a5;
    white-space: nowrap;
}

.tabs a.active {
    padding: 0 4px 0 2px;
    background: #f7f7f7;
    border-bottom: 0;
}

.view-tools {
    display: flex;
    margin-left: 176px;
}

.view-tools .more::after {
    background: #8d919b;
}

/* Work area */
.workspace {
    flex: 1;
    display: flex;
    min-height: 242px;
}

.side-tools {
    width: 24px;
    flex: none;
    padding-top: 5px;
    border-top: 2px dotted #bbb;
}

.side-tools .tool {
    height: 13px;
}

.side-tools .tool:nth-child(even) {
    height: 14px;
}

.side-tools .more {
    width: 22px;
}

.side-tools hr {
    margin: 1px 0;
    border: 0;
    border-top: 1px solid #aaa;
}

.manager {
    width: 197px;
    flex: none;
    display: flex;
    flex-direction: column;
    border-right: 1px solid #999;
}

.grip {
    height: 12px;
    display: flex;
    align-items: center;
    justify-content: center;
    border-bottom: 1px solid #ccc;
}

.grip::after,
.collapse::after {
    content: "";
    width: 4px;
    height: 4px;
    flex: none;
    border: 1px solid #999;
    border-radius: 50%;
}

.manager-tabs {
    display: flex;
    align-items: center;
    margin-top: 2px;
    padding-right: 3px;
}

.manager-tabs button {
    width: 21px;
    height: 14px;
    display: flex;
    align-items: center;
    justify-content: center;
    background: #d0d0d0;
    border: 1px solid #aaa;
    border-left: 0;
}

.manager-tabs .active {
    background: #f7f7f7;
    border-color: transparent #aaa transparent transparent;
}

.manager-tabs .chev {
    margin-left: auto;
}

.filter {
    height: 17px;
    display: flex;
    align-items: center;
    gap: 1px;
    margin: 0 1px;
    padding-left: 1px;
    border: 1px solid #ccc;
}

.filter::after {
    content: "";
    width: 2px;
    height: 2px;
    background: #444;
    margin-top: 2px;
}

.tree-area {
    flex: 1 1 184px;
    display: flex;
    min-height: 0;
    overflow: hidden;
}

.tree {
    flex: 1;
    min-width: 0;
    overflow: hidden;
}

.tree li {
    position: relative;
    height: 12px;
    display: flex;
    align-items: center;
    gap: 2px;
    padding-left: 12px;
    white-space: nowrap;
}

.tree li:nth-child(even) {
    height: 13px;
}

.tree .sub {
    padding-left: 24px;
}

.tree svg {
    width: 11px;
    height: 11px;
}

/* Expander arrow in front of the icon */
.fold::before {
    content: "";
    position: absolute;
    margin-left: -9px;
    border: 2px solid transparent;
    border-left: 3px solid #444;
    border-right: 0;
}

.fold.open::before {
    border: 2px solid transparent;
    border-top: 3px solid #444;
    border-bottom: 0;
}

.chev {
    width: 5px;
    height: 5px;
    flex: none;
    border: solid #555;
    border-width: 1px 1px 0 0;
}

.chev.right {
    transform: rotate(45deg);
}

.chev.left {
    transform: rotate(-135deg);
}

.chev.up {
    transform: rotate(-45deg);
}

.chev.down {
    transform: rotate(135deg);
}

.vscroll {
    width: 9px;
    display: flex;
    flex-direction: column;
    align-items: center;
    padding: 4px 0 3px;
    background: #f0f0f0;
}

.vscroll span {
    width: 9px;
    height: 75px;
    margin: 12px 0 auto;
    background: #cdcdcd;
}

.hscroll {
    height: 12px;
    display: flex;
    align-items: center;
    gap: 3px;
    padding: 0 14px 0 3px;
    background: #f0f0f0;
}

.hscroll span {
    width: 157px;
    height: 10px;
    background: #cdcdcd;
}

.hscroll .right {
    margin-left: auto;
}

.viewport {
    flex: 1;
    position: relative;
    background: #c5c8d3;
}

.model {
    position: absolute;
    width: 100%;
    height: 100%;
    font-family: "Liberation Serif", serif;
    font-size: 7px;
}

.collapse {
    position: absolute;
    z-index: 1;
    top: 101px;
    left: -1px;
    width: 7px;
    height: 26px;
    display: flex;
    align-items: center;
    justify-content: center;
    background: #f7f7f7;
    border: 1px solid #aaa;
    border-left: 0;
}

/* Motion study */
.study {
    margin-left: 24px;
    border-left: 1px solid #8fa5b8;
    border-top: 1px solid #dfe3ea;
}

.study-bar {
    height: 14px;
    display: flex;
    align-items: center;
}

.picker {
    position: relative;
    flex: none;
}

.picker select {
    display: block;
    appearance: none;
    width: 100%;
    height: 13px;
    padding-left: 3px;
    border: 1px solid #b5b5b5;
    background: #f2f2f2;
    line-height: 11px;
}

.picker .chev {
    position: absolute;
    top: 3px;
    right: 4px;
    pointer-events: none;
}

.study-type {
    width: 57px;
}

.seek {
    appearance: none;
    width: 122px;
    height: 12px;
    margin: 0 5px 0 3px;
    background: linear-gradient(#ddd, #ddd) center / 100% 2px no-repeat;
}

.seek::-webkit-slider-thumb {
    appearance: none;
    width: 6px;
    height: 10px;
    background: #0a78d6;
    border-radius: 0 0 3px 3px;
}

.speed {
    width: 52px;
    margin-right: 3px;
}

.speed select {
    background: #fff;
}

.speed mark {
    position: absolute;
    top: 2px;
    left: 2px;
    padding: 0 1px;
    background: #0a78d6;
    color: #fff;
    font-size: 7px;
    line-height: 9px;
}

.study-body {
    display: flex;
    min-height: 109px;
}

.study-tree {
    width: 123px;
    flex: none;
    overflow: hidden;
    border-right: 3px solid #b3b7c3;
}

.study-filters {
    height: 16px;
    display: flex;
    align-items: center;
    justify-content: flex-end;
    background: #cbcbcb;
}

.study-tree .tree {
    padding-left: 1px;
}

.study-tree .root::after {
    content: "";
    position: absolute;
    inset: 0 -1px 0 11px;
    border: 1px solid #aaa;
}

.timeline {
    flex: 1;
    min-width: 0;
    position: relative;
    overflow: hidden;
    background: linear-gradient(#cbcbcb, #cbcbcb) top / 100% 16px no-repeat;
}

.seconds {
    height: 100%;
    display: flex;
    margin-left: 25px;
}

.seconds li {
    width: 58px;
    flex: none;
    padding-left: 1px;
    border-left: 1px solid #d2d2d2;
    color: #666;
    font-weight: bold;
    background:
        linear-gradient(#777, #777) 0 0 / 1px 16px no-repeat,
        linear-gradient(#999, #999) 50% 11px / 1px 5px no-repeat,
        repeating-linear-gradient(90deg, transparent 0 5px, #999 5px 6px) 0 13px / 100% 3px no-repeat;
}

.seconds li:nth-child(3n + 1) {
    width: 59px;
}

.seconds li:first-child {
    border-left: 1px solid #777;
}

.keys {
    position: absolute;
    top: 16px;
    left: 21px;
}

.keys li {
    height: 12px;
    color: #000;
}

.keys li:nth-child(even) {
    height: 13px;
}

.keys svg {
    width: 9px;
}

.keys .muted {
    color: #999;
}

.keys .blue {
    color: #33b;
}
```
